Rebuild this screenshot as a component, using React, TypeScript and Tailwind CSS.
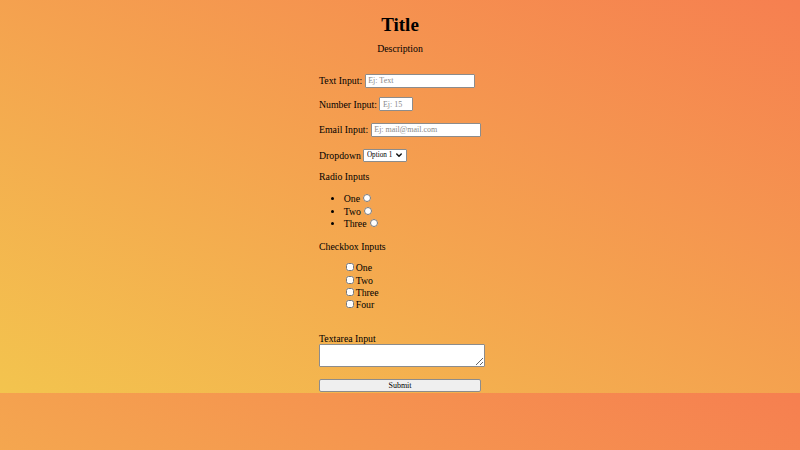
export default function App() {
  return (
    <div className="h-[450px] w-full bg-repeat font-['Liberation_Serif',serif] text-black [background-image:linear-gradient(to_top_right,#f3c44e,#f67f50)] [background-size:100%_393px]">
      <form
        className="mx-auto w-[162px] text-[9.8px] leading-[11px]"
        onSubmit={(e) => e.preventDefault()}
      >
        <h1 className="pt-[14px] text-center text-[19px] font-bold leading-[21px] whitespace-nowrap">
          Title
        </h1>
        <p className="mt-[8.3px] text-center whitespace-nowrap">Description</p>

        <div className="mt-[19.4px] flex h-[14px] items-center gap-[2.5px] whitespace-nowrap">
          <span>Text Input:</span>
          <input
            type="text"
            placeholder="Ej: Text"
            className="h-[14px] w-[110px] shrink-0 rounded-[1px] border border-[#8c8c8c] bg-white px-[2.5px] text-[8px] text-black outline-none placeholder:text-[#8a8a8a]"
          />
        </div>

        <div className="mt-[9.6px] flex h-[14px] items-center gap-[2.5px] whitespace-nowrap">
          <span>Number Input:</span>
          <input
            type="number"
            placeholder="Ej: 15"
            className="h-[14px] w-[34px] shrink-0 rounded-[1px] border border-[#8c8c8c] bg-white px-[2.5px] text-[8px] text-black outline-none [appearance:textfield] placeholder:text-[#8a8a8a] [&::-webkit-inner-spin-button]:appearance-none [&::-webkit-outer-spin-button]:appearance-none"
          />
        </div>

        <div className="mt-[11.7px] flex h-[14px] items-center gap-[2.5px] whitespace-nowrap">
          <span>Email Input:</span>
          <input
            type="email"
            placeholder="Ej: mail@mail.com"
            className="h-[14px] w-[110px] shrink-0 rounded-[1px] border border-[#8c8c8c] bg-white px-[2.5px] text-[8px] text-black outline-none placeholder:text-[#8a8a8a]"
          />
        </div>

        <div className="mt-[12px] flex h-[13px] items-center gap-[2px] whitespace-nowrap">
          <span>Dropdown</span>
          <span className="relative block h-[13px] w-[44px] shrink-0">
            <select className="block h-[13px] w-[44px] appearance-none rounded-[1px] border border-[#8c8c8c] bg-white pl-[3px] text-[7.2px] leading-[11px] text-black outline-none">
              <option>Option 1</option>
              <option>Option 2</option>
            </select>
            {/* dropdown chevron */}
            <svg
              viewBox="0 0 8 6"
              className="pointer-events-none absolute top-[4.2px] right-[5px] h-[4.5px] w-[6px]"
            >
              <path d="M1 1.2 L4 4.4 L7 1.2" fill="none" stroke="#111" strokeWidth="1.9" strokeLinecap="round" strokeLinejoin="round" />
            </svg>
          </span>
        </div>

        <div className="mt-[9.3px] whitespace-nowrap">Radio Inputs</div>
        <ul className="mt-[10.9px] list-disc pl-[24.7px] leading-[12.5px] whitespace-nowrap">
          {["One", "Two", "Three"].map((v) => (
            <li key={v}>
              {v}{" "}
              <input
                type="radio"
                name="radio"
                className="m-0 ml-[1px] h-[8px] w-[8px] align-baseline"
              />
            </li>
          ))}
        </ul>

        <div className="mt-[9.9px] whitespace-nowrap">Checkbox Inputs</div>
        <div className="mt-[10.8px] pl-[27px] leading-[12.2px] whitespace-nowrap">
          {["One", "Two", "Three", "Four"].map((v) => (
            <div key={v}>
              <input
                type="checkbox"
                className="m-0 mr-[1.7px] h-[8px] w-[8px] align-baseline"
              />
              {v}
            </div>
          ))}
        </div>

        <div className="mt-[21.8px] whitespace-nowrap">Textarea Input</div>
        <textarea className="block h-[23.5px] w-[166px] rounded-[1px] border border-[#8c8c8c] bg-white outline-none" />

        <button
          type="submit"
          className="mt-[11.5px] block h-[13.5px] w-full rounded-[2px] border border-[#8c8c8c] bg-[#efefef] text-[8px] leading-none text-black"
        >
          Submit
        </button>
      </form>
    </div>
  );
}
